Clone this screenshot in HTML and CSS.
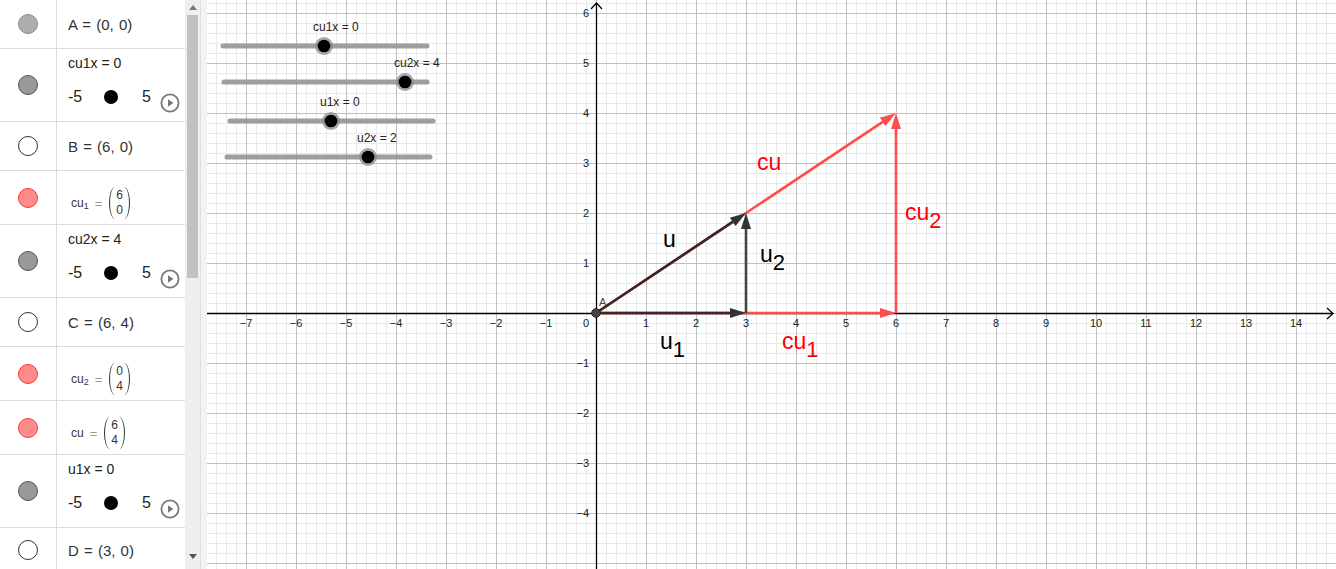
FILE: index.html
```html
<!DOCTYPE html>
<html>
<head>
<meta charset="utf-8">
<link rel="stylesheet" href="styles.css">
</head>
<body>
<div class="app">
  <aside class="algebra">
    <div class="rows">
      <div class="row r48">
        <div class="icon"><span class="dot pt-gray"></span></div>
        <div class="content"><span class="eq">A = (0, 0)</span></div>
      </div>
      <div class="row r73">
        <div class="icon"><span class="dot sl-gray"></span></div>
        <div class="content slider-content">
          <span class="sl-label">cu1x = 0</span>
          <div class="sl-line"><span class="num">-5</span><span class="knob"></span><span class="num">5</span>
            <svg class="play" width="20" height="20" viewBox="0 0 20 20"><circle cx="10" cy="10" r="8.6" fill="none" stroke="#777" stroke-width="1.8"/><path d="M8 6.2 L13.4 10 L8 13.8 Z" fill="#777"/></svg>
          </div>
        </div>
      </div>
      <div class="row r49">
        <div class="icon"><span class="dot pt-white"></span></div>
        <div class="content"><span class="eq">B = (6, 0)</span></div>
      </div>
      <div class="row r54">
        <div class="icon"><span class="dot vec-red"></span></div>
        <div class="content vec-content">
          <span class="vname">cu<sub>1</sub></span><span class="veq">=</span>
          <span class="matrix"><span class="paren l"></span><span class="cells"><span>6</span><span>0</span></span><span class="paren r"></span></span>
        </div>
      </div>
      <div class="row r73">
        <div class="icon"><span class="dot sl-gray"></span></div>
        <div class="content slider-content">
          <span class="sl-label">cu2x = 4</span>
          <div class="sl-line"><span class="num">-5</span><span class="knob"></span><span class="num">5</span>
            <svg class="play" width="20" height="20" viewBox="0 0 20 20"><circle cx="10" cy="10" r="8.6" fill="none" stroke="#777" stroke-width="1.8"/><path d="M8 6.2 L13.4 10 L8 13.8 Z" fill="#777"/></svg>
          </div>
        </div>
      </div>
      <div class="row r49">
        <div class="icon"><span class="dot pt-white"></span></div>
        <div class="content"><span class="eq">C = (6, 4)</span></div>
      </div>
      <div class="row r54">
        <div class="icon"><span class="dot vec-red"></span></div>
        <div class="content vec-content">
          <span class="vname">cu<sub>2</sub></span><span class="veq">=</span>
          <span class="matrix"><span class="paren l"></span><span class="cells"><span>0</span><span>4</span></span><span class="paren r"></span></span>
        </div>
      </div>
      <div class="row r54">
        <div class="icon"><span class="dot vec-red"></span></div>
        <div class="content vec-content">
          <span class="vname">cu</span><span class="veq">=</span>
          <span class="matrix"><span class="paren l"></span><span class="cells"><span>6</span><span>4</span></span><span class="paren r"></span></span>
        </div>
      </div>
      <div class="row r73">
        <div class="icon"><span class="dot sl-gray"></span></div>
        <div class="content slider-content">
          <span class="sl-label">u1x = 0</span>
          <div class="sl-line"><span class="num">-5</span><span class="knob"></span><span class="num">5</span>
            <svg class="play" width="20" height="20" viewBox="0 0 20 20"><circle cx="10" cy="10" r="8.6" fill="none" stroke="#777" stroke-width="1.8"/><path d="M8 6.2 L13.4 10 L8 13.8 Z" fill="#777"/></svg>
          </div>
        </div>
      </div>
      <div class="row rlast">
        <div class="icon"><span class="dot pt-white"></span></div>
        <div class="content"><span class="eq">D = (3, 0)</span></div>
      </div>
    </div>
    <div class="scrollbar">
      <span class="sb-btn"><span class="tri up"></span></span>
      <div class="sb-thumb"></div>
      <div class="sb-space"></div>
      <span class="sb-btn bottom"><span class="tri down"></span></span>
    </div>
  </aside>
  <div class="divider"></div>
  <main class="graphics">
    <svg class="plot" width="1129" height="569" viewBox="0 0 1129 569">
      <defs>
        <pattern id="minor" x="9" y="3" width="10" height="10" patternUnits="userSpaceOnUse">
          <path d="M0.5 0 V10 M0 0.5 H10" stroke="#e9e9e9" stroke-width="1" fill="none"/>
        </pattern>
        <pattern id="major" x="39" y="13" width="50" height="50" patternUnits="userSpaceOnUse">
          <path d="M0.5 0 V50 M0 0.5 H50" stroke="#c0c0c0" stroke-width="1" fill="none"/>
        </pattern>
      </defs>
      <rect x="0" y="0" width="1129" height="569" fill="#fff"/>
      <rect x="0" y="0" width="1129" height="569" fill="url(#minor)"/>
      <rect x="0" y="0" width="1129" height="569" fill="url(#major)"/>

      <!-- axes -->
      <g stroke="#000" stroke-width="1.3" fill="none">
        <path d="M0 313.5 H1126"/>
        <path d="M1120 308 L1126 313.5 L1120 319"/>
        <path d="M389.5 3 V569"/>
        <path d="M384 9 L389.5 3 L395 9"/>
      </g>

      <!-- tick labels -->
      <g class="ticks" font-size="11" fill="#222" text-anchor="middle">
        <text x="39" y="327">−7</text>
        <text x="89" y="327">−6</text>
        <text x="139" y="327">−5</text>
        <text x="189" y="327">−4</text>
        <text x="239" y="327">−3</text>
        <text x="289" y="327">−2</text>
        <text x="339" y="327">−1</text>
        <text x="439" y="327">1</text>
        <text x="489" y="327">2</text>
        <text x="539" y="327">3</text>
        <text x="589" y="327">4</text>
        <text x="639" y="327">5</text>
        <text x="689" y="327">6</text>
        <text x="739" y="327">7</text>
        <text x="789" y="327">8</text>
        <text x="839" y="327">9</text>
        <text x="889" y="327">10</text>
        <text x="939" y="327">11</text>
        <text x="989" y="327">12</text>
        <text x="1039" y="327">13</text>
        <text x="1089" y="327">14</text>
      </g>
      <g class="ticks" font-size="11" fill="#222" text-anchor="end">
        <text x="382" y="327">0</text>
        <text x="382" y="17">6</text>
        <text x="382" y="67">5</text>
        <text x="382" y="117">4</text>
        <text x="382" y="167">3</text>
        <text x="382" y="217">2</text>
        <text x="382" y="267">1</text>
        <text x="382" y="367">−1</text>
        <text x="382" y="417">−2</text>
        <text x="382" y="467">−3</text>
        <text x="382" y="517">−4</text>
      </g>

      <!-- red vectors -->
      <g stroke="#ff4d4d" stroke-width="2.6" fill="none">
        <path d="M389 313 L675.7 121.9"/>
        <path d="M389 313 H673"/>
        <path d="M689 313 V129"/>
      </g>
      <g fill="#ff4d4d">
        <path d="M689 113 L678.5 126.1 L672.9 117.7 Z"/>
        <path d="M689 313 L673 308 L673 318 Z"/>
        <path d="M689 113 L684 129 L694 129 Z"/>
      </g>

      <!-- dark vectors -->
      <g stroke="#3a2828" stroke-width="2.6" fill="none">
        <path d="M389 313 L525.7 221.9"/>
        <path d="M389 313 H523"/>
      </g>
      <path d="M539 313 V229" stroke="#444" stroke-width="2.6" fill="none"/>
      <g fill="#333">
        <path d="M539 213 L528.5 226.1 L522.9 217.7 Z"/>
        <path d="M539 313 L523 308 L523 318 Z"/>
        <path d="M539 213 L534 229 L544 229 Z"/>
      </g>

      <!-- point A -->
      <circle cx="389" cy="313" r="4.3" fill="#444" stroke="#222" stroke-width="1"/>
      <text class="ticks" x="392" y="306" font-size="11" fill="#444">A</text>

      <!-- vector labels -->
      <g class="vlabel" font-size="23">
        <text x="456" y="247" fill="#000">u</text>
        <text x="553" y="262" fill="#000">u<tspan dy="8" font-size="22">2</tspan></text>
        <text x="453" y="349" fill="#000">u<tspan dy="8" font-size="22">1</tspan></text>
        <text x="550" y="170" fill="#f00">cu</text>
        <text x="698" y="220" fill="#f00">cu<tspan dy="8" font-size="22">2</tspan></text>
        <text x="575" y="349" fill="#f00">cu<tspan dy="8" font-size="22">1</tspan></text>
      </g>

      <!-- sliders -->
      <g stroke="#999" stroke-width="5" stroke-linecap="round" fill="none" opacity="0.95">
        <path d="M16 46 H220"/>
        <path d="M17 82 H220"/>
        <path d="M23 121 H226"/>
        <path d="M20 157 H223"/>
      </g>
      <g>
        <circle cx="117" cy="46" r="9" fill="#8a8a8a" opacity="0.75"/>
        <circle cx="117" cy="46" r="6.3" fill="#000"/>
        <circle cx="198" cy="82" r="9" fill="#8a8a8a" opacity="0.75"/>
        <circle cx="198" cy="82" r="6.3" fill="#000"/>
        <circle cx="124" cy="121" r="9" fill="#8a8a8a" opacity="0.75"/>
        <circle cx="124" cy="121" r="6.3" fill="#000"/>
        <circle cx="161" cy="157" r="9" fill="#8a8a8a" opacity="0.75"/>
        <circle cx="161" cy="157" r="6.3" fill="#000"/>
      </g>
      <g class="ticks" font-size="12" fill="#222">
        <text x="106" y="31">cu1x = 0</text>
        <text x="187" y="67">cu2x = 4</text>
        <text x="113" y="106">u1x = 0</text>
        <text x="150" y="142">u2x = 2</text>
      </g>
    </svg>
  </main>
</div>
</body>
</html>
```
FILE: styles.css
```css
* { box-sizing: border-box; }
html, body {
  margin: 0;
  padding: 0;
  width: 1336px;
  height: 569px;
  overflow: hidden;
  background: #fff;
  font-family: "Liberation Sans", Arial, sans-serif;
  color: #333;
}
.app {
  display: flex;
  width: 1336px;
  height: 569px;
}
.algebra {
  display: flex;
  width: 200px;
  height: 569px;
  flex: none;
  background: #fff;
}
.rows {
  width: 185px;
  display: flex;
  flex-direction: column;
  overflow: hidden;
}
.row {
  display: flex;
  border-bottom: 1px solid #dcdcdc;
  flex: none;
}
.r48 { height: 49px; }
.r49 { height: 49px; }
.r54 { height: 54px; }
.r73 { height: 73px; }
.rlast { height: 60px; border-bottom: none; }
.row:first-child { height: 49px; }
.icon {
  width: 57px;
  flex: none;
  border-right: 1px solid #dcdcdc;
  display: flex;
  align-items: center;
  justify-content: center;
  padding-right: 1px;
}
.rlast .icon { align-items: flex-start; padding-top: 12px; }
.dot {
  display: block;
  width: 20px;
  height: 20px;
  border-radius: 50%;
}
.pt-gray { background: #adadad; border: 1px solid #8c8c8c; }
.sl-gray { background: #999; border: 1px solid #555; }
.pt-white { background: #fff; border: 1.3px solid #333; }
.vec-red { background: #ff8c8c; border: 1px solid #ff3333; }
.content {
  flex: 1;
  display: flex;
  align-items: center;
  padding-left: 11px;
}
.rlast .content { align-items: flex-start; padding-top: 14px; }
.eq {
  font-size: 15px;
  color: #333;
  word-spacing: 1px;
}
.slider-content {
  flex-direction: column;
  align-items: flex-start;
  padding-top: 6px;
}
.sl-label {
  font-size: 14px;
  color: #222;
  line-height: 16px;
}
.sl-line {
  display: flex;
  align-items: center;
  margin-top: 17px;
  width: 118px;
  position: relative;
  font-size: 16px;
  color: #222;
  line-height: 18px;
}
.sl-line .num:first-child { width: 36px; }
.knob {
  width: 14px;
  height: 14px;
  border-radius: 50%;
  background: #000;
  margin-right: 24px;
}
.play {
  position: absolute;
  left: 92px;
  top: 5px;
}
.vec-content {
  padding-top: 11px;
  padding-left: 14px;
}
.vname {
  font-size: 12px;
  color: #333;
}
.vname sub {
  font-size: 9px;
  vertical-align: -2px;
  line-height: 0;
}
.veq {
  font-size: 13px;
  color: #999;
  margin: 0 7px 0 6px;
}
.matrix {
  display: inline-flex;
  align-items: stretch;
  height: 32px;
}
.paren {
  width: 6px;
  border: 0 solid #333;
}
.paren.l {
  border-left-width: 1.3px;
  border-radius: 6px 0 0 6px / 16px 0 0 16px;
}
.paren.r {
  border-right-width: 1.3px;
  border-radius: 0 6px 6px 0 / 0 16px 16px 0;
}
.cells {
  display: flex;
  flex-direction: column;
  justify-content: center;
  align-items: center;
  font-size: 12px;
  line-height: 15px;
  color: #333;
  padding: 0 1px;
}
.scrollbar {
  width: 15px;
  flex: none;
  background: #efefef;
  display: flex;
  flex-direction: column;
  align-items: center;
}
.sb-btn {
  height: 15px;
  width: 15px;
  display: flex;
  align-items: center;
  justify-content: center;
  flex: none;
}
.sb-btn.bottom { height: 16px; margin-bottom: 5px; }
.tri {
  width: 0;
  height: 0;
  border-left: 4.5px solid transparent;
  border-right: 4.5px solid transparent;
}
.tri.up { border-bottom: 5px solid #777; }
.tri.down { border-top: 5px solid #555; }
.sb-thumb {
  width: 11px;
  height: 263px;
  background: #c1c1c1;
  flex: none;
}
.sb-space { flex: 1; }
.divider {
  width: 7px;
  flex: none;
  height: 569px;
  background: #f3f3f3;
  border-left: 1px solid #dedede;
}
.graphics {
  flex: 1;
  height: 569px;
  overflow: hidden;
}
.plot {
  display: block;
}
.ticks {
  font-family: "Liberation Sans", Arial, sans-serif;
}
.vlabel text {
  font-family: "Liberation Sans", Arial, sans-serif;
}
```
